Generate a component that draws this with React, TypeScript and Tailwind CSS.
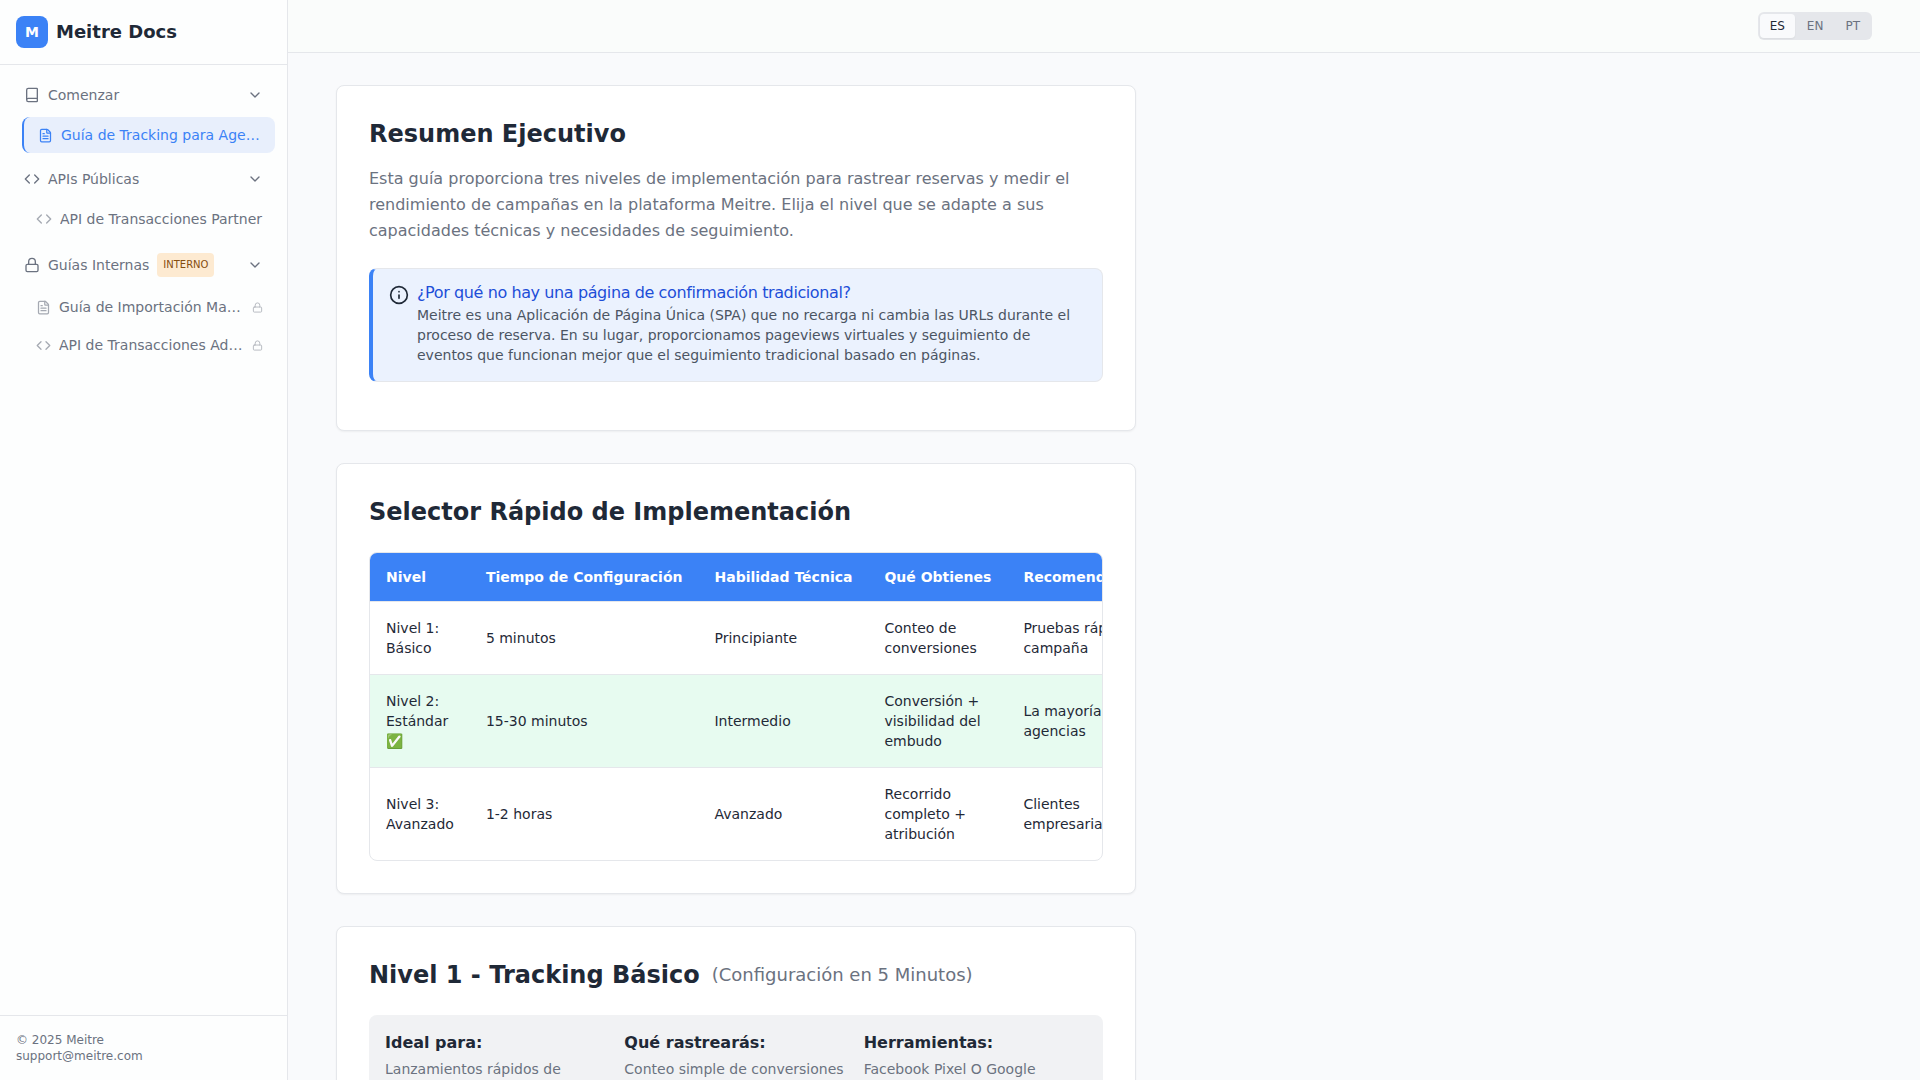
import React, { useState } from "react";
import { Book, ChevronDown, Code, FileText, Info, Lock, type LucideIcon } from "lucide-react";

type Item = { label: string; icon: LucideIcon; active?: boolean; locked?: boolean };
type Section = { title: string; icon: LucideIcon; badge?: string; items: Item[] };

const sections: Section[] = [
  {
    title: "Comenzar",
    icon: Book,
    items: [{ label: "Guía de Tracking para Agencias", icon: FileText, active: true }],
  },
  {
    title: "APIs Públicas",
    icon: Code,
    items: [{ label: "API de Transacciones Partner", icon: Code }],
  },
  {
    title: "Guías Internas",
    icon: Lock,
    badge: "INTERNO",
    items: [
      { label: "Guía de Importación Masiva", icon: FileText, locked: true },
      { label: "API de Transacciones Admin", icon: Code, locked: true },
    ],
  },
];

const columns = ["Nivel", "Tiempo de Configuración", "Habilidad Técnica", "Qué Obtienes", "Recomendado Para"];

const levels = [
  { cells: ["Nivel 1: Básico", "5 minutos", "Principiante", "Conteo de conversiones", "Pruebas rápidas de campaña"] },
  {
    cells: ["Nivel 2: Estándar ✅", "15-30 minutos", "Intermedio", "Conversión + visibilidad del embudo", "La mayoría de las agencias"],
    highlighted: true,
  },
  { cells: ["Nivel 3: Avanzado", "1-2 horas", "Avanzado", "Recorrido completo + atribución", "Clientes empresariales"] },
];

const facts = [
  { title: "Ideal para:", text: "Lanzamientos rápidos de campañas" },
  { title: "Qué rastrearás:", text: "Conteo simple de conversiones" },
  { title: "Herramientas:", text: "Facebook Pixel O Google Analytics" },
];

function NavItem({ item }: { item: Item }) {
  const Icon = item.icon;
  const state = item.active
    ? "-ml-0.5 border-l-2 border-[#3b82f6] bg-[#e8effc] pl-3.5 text-[#3b82f6]"
    : "pl-3 text-[#6b7280]";
  const iconSize = item.active || item.locked ? "size-[15px]" : "size-4";
  const iconTone = item.active ? "" : "opacity-60";
  return (
    <a href="#" className={`flex h-9 items-center gap-2 rounded-lg pr-3 text-sm ${state}`}>
      <Icon className={`shrink-0 ${iconSize} ${iconTone}`} />
      <span className="min-w-0 flex-1 truncate">{item.label}</span>
      {item.locked && <Lock className="size-[11px] shrink-0 opacity-50" />}
    </a>
  );
}

function Sidebar() {
  return (
    <aside className="flex w-72 shrink-0 flex-col border-r border-[#e5e7eb] bg-[#fdfefe]">
      <div className="flex items-center gap-2 border-b border-[#e5e7eb] p-4">
        <div className="flex size-8 items-center justify-center rounded-lg bg-[#3b82f6] text-sm font-bold text-white">M</div>
        <span className="text-lg leading-7 font-bold text-[#1f2937]">Meitre Docs</span>
      </div>
      <nav className="flex flex-1 flex-col gap-2 p-3">
        {sections.map((section) => {
          const Icon = section.icon;
          return (
            <div key={section.title} className="flex flex-col gap-1">
              <button type="button" className="flex w-full items-center gap-2 rounded-lg px-3 py-2 text-left text-sm text-[#6b7280]">
                <Icon className="size-4 shrink-0" />
                <span>{section.title}</span>
                {section.badge && (
                  <span className="flex h-6 items-center rounded bg-[#fdead1] px-1.5 text-[10px] text-[#854d0e]">{section.badge}</span>
                )}
                <ChevronDown className="ml-auto size-4 shrink-0" />
              </button>
              <div className="ml-3 flex flex-col gap-0.5">
                {section.items.map((item) => (
                  <NavItem key={item.label} item={item} />
                ))}
              </div>
            </div>
          );
        })}
      </nav>
      <footer className="border-t border-[#e5e7eb] p-4 text-xs text-[#6b7280]">
        <p>© 2025 Meitre</p>
        <p>support@meitre.com</p>
      </footer>
    </aside>
  );
}

function LanguageSwitch() {
  const [current, setCurrent] = useState("ES");
  return (
    <div className="flex gap-0.5 rounded-md bg-[#e5e7eb] p-0.5">
      {["ES", "EN", "PT"].map((lang) => (
        <button
          key={lang}
          type="button"
          aria-pressed={current === lang}
          onClick={() => setCurrent(lang)}
          className={`rounded px-2.5 py-1 text-xs ${
            current === lang ? "bg-[#f9fafc] text-[#1f2937] shadow-xs" : "text-[#6b7280]"
          }`}
        >
          {lang}
        </button>
      ))}
    </div>
  );
}

function Card({ children }: { children: React.ReactNode }) {
  return <section className="rounded-lg border border-[#e5e7eb] bg-white p-8 shadow-xs">{children}</section>;
}

export default function App() {
  return (
    <div className="flex h-screen overflow-hidden bg-[#f9fafc] font-['DejaVu_Sans',sans-serif] text-[#1f2937]">
      <Sidebar />
      <div className="flex min-w-0 flex-1 flex-col">
        <header className="flex shrink-0 justify-end border-b border-[#e5e7eb] bg-[#fafcfb] px-12 py-3">
          <LanguageSwitch />
        </header>
        <main className="min-h-0 flex-1 overflow-hidden px-12 py-8">
          <div className="flex max-w-[800px] flex-col gap-8">
            <Card>
              <h2 className="mb-4 text-2xl font-bold">Resumen Ejecutivo</h2>
              <p className="mb-6 leading-[26px] text-[#6b7280]">
                Esta guía proporciona tres niveles de implementación para rastrear reservas y medir el rendimiento de
                campañas en la plataforma Meitre. Elija el nivel que se adapte a sus capacidades técnicas y necesidades de
                seguimiento.
              </p>
              <div
                role="note"
                className="mb-4 flex gap-2 rounded-lg border border-l-4 border-[#e5e7eb] border-l-[#3b82f6] bg-[#ebf2fe] p-4"
              >
                <Info className="size-5 shrink-0" />
                <div>
                  <h3 className="mb-1 leading-4 tracking-tight text-[#1d4ed8]">¿Por qué no hay una página de confirmación tradicional?</h3>
                  <p className="text-sm text-[#4b5563]">
                    Meitre es una Aplicación de Página Única (SPA) que no recarga ni cambia las URLs durante el proceso de
                    reserva. En su lugar, proporcionamos pageviews virtuales y seguimiento de eventos que funcionan mejor
                    que el seguimiento tradicional basado en páginas.
                  </p>
                </div>
              </div>
            </Card>

            <Card>
              <h2 className="mb-6 text-2xl font-bold">Selector Rápido de Implementación</h2>
              <div className="overflow-hidden rounded-lg border border-[#e5e7eb]">
                <table className="w-full text-left text-sm">
                  <thead>
                    <tr className="border-b border-[#e5e7eb] bg-[#3b82f6] text-white">
                      {columns.map((column) => (
                        <th key={column} scope="col" className="h-12 px-4 font-bold whitespace-nowrap">
                          {column}
                        </th>
                      ))}
                    </tr>
                  </thead>
                  <tbody>
                    {levels.map((level) => (
                      <tr
                        key={level.cells[0]}
                        className={`border-b border-[#e5e7eb] last:border-b-0 ${level.highlighted ? "bg-[#e7fbf0]" : ""}`}
                      >
                        {level.cells.map((cell) => (
                          <td key={cell} className="p-4">
                            {cell}
                          </td>
                        ))}
                      </tr>
                    ))}
                  </tbody>
                </table>
              </div>
            </Card>

            <Card>
              <h2 className="mb-6 flex items-center gap-3 text-2xl font-bold">
                Nivel 1 - Tracking Básico
                <span className="text-lg leading-7 font-normal text-[#6b7280]">(Configuración en 5 Minutos)</span>
              </h2>
              <div className="grid grid-cols-3 gap-4 rounded-lg bg-[#f1f2f4] p-4">
                {facts.map((fact) => (
                  <div key={fact.title}>
                    <h3 className="font-bold">{fact.title}</h3>
                    <p className="mt-1 text-sm text-[#6b7280]">{fact.text}</p>
                  </div>
                ))}
              </div>
            </Card>
          </div>
        </main>
      </div>
    </div>
  );
}
